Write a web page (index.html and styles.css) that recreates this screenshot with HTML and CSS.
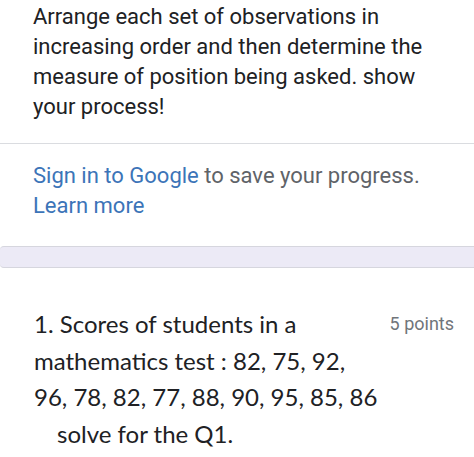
FILE: index.html
```html
<!DOCTYPE html>
<html>
<head>
<meta charset="utf-8">
<link rel="stylesheet" href="styles.css">
</head>
<body>
<div class="page">
  <section class="header-card">
    <div class="description">Arrange each set of observations in increasing order and then determine the measure of position being asked. show your process!</div>
    <div class="signin">
      <a class="link">Sign in to Google</a> to save your progress. <a class="link">Learn more</a>
    </div>
  </section>
  <div class="gap"></div>
  <section class="question-card">
    <div class="question-row">
      <div class="question-title">1. Scores of students in a mathematics test : 82, 75, 92, 96, 78, 82, 77, 88, 90, 95, 85, 86<br><span class="indent">solve for the Q1.</span></div>
      <div class="points">5 points</div>
    </div>
  </section>
</div>
</body>
</html>
```
FILE: styles.css
```css
html, body {
  margin: 0;
  padding: 0;
  background: #ffffff;
}
.page {
  width: 474px;
  overflow: hidden;
}
.header-card {
  background: #ffffff;
}
.description {
  font-family: Roboto, "Liberation Sans", sans-serif;
  font-size: 22px;
  line-height: 30px;
  color: #202124;
  padding: 2px 50px 21px 33px;
  border-bottom: 1px solid #dadce0;
}
.signin {
  font-family: Roboto, "Liberation Sans", sans-serif;
  font-size: 22px;
  line-height: 30px;
  color: #5f6368;
  padding: 17px 30px 25px 33px;
}
.link {
  color: #3c74b8;
  text-decoration: none;
}
.gap {
  height: 20px;
  background: #eceaf6;
  border-top: 1px solid #d6d6de;
  border-bottom: 1px solid #d6d6de;
  border-top-left-radius: 4px;
  border-bottom-left-radius: 4px;
}
.question-card {
  background: #ffffff;
  padding: 38px 20px 0 34px;
}
.question-row {
  display: flex;
  justify-content: space-between;
  align-items: flex-start;
}
.question-title {
  font-family: Lato, "Noto Sans", sans-serif;
  font-size: 24px;
  line-height: 36.7px;
  color: #202124;
  width: 345px;
}
.indent {
  padding-left: 23px;
}
.points {
  font-family: Roboto, "Liberation Sans", sans-serif;
  font-size: 18px;
  line-height: 36px;
  color: #70757a;
  white-space: nowrap;
}
```
